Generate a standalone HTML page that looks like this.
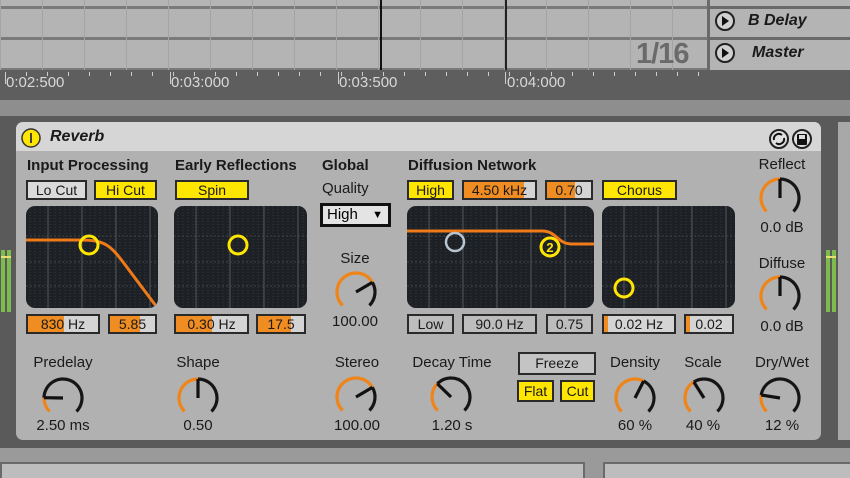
<!DOCTYPE html>
<html><head><meta charset="utf-8">
<style>
*{margin:0;padding:0;box-sizing:border-box}
body{width:850px;height:478px;overflow:hidden;background:#5c5c5c;font-family:"Liberation Sans",sans-serif;position:relative}
.a{position:absolute}
.t{position:absolute;font-size:14px;color:#1a1a1a;white-space:nowrap}
.b{font-weight:bold}
.box{position:absolute;height:20px;border:2px solid #2a2a2a;font-size:14px;text-align:center;line-height:16px;color:#1a1a1a;background:#d4d4d4;overflow:hidden}
.y{background:#ffe600}
.g{background:#bdbdbd}
.fill{position:absolute;left:0;top:0;bottom:0;background:#ef8c22}
.box span{position:relative}
.disp{position:absolute;background:#1d2024;border-radius:9px;overflow:hidden}
.lbl{position:absolute;font-size:15px;color:#1a1a1a;text-align:center;width:90px}
</style></head><body>
<div class="a" style="left:0;top:0;width:850px;height:70px;background:#b4b4b4"></div>
<div class="a" style="left:0;top:6px;width:708px;height:3px;background:#7a7a7a"></div>
<div class="a" style="left:0;top:37px;width:708px;height:3px;background:#7a7a7a"></div>
<div class="a" style="left:0;top:68px;width:708px;height:2px;background:#7a7a7a"></div>
<div id="grid"></div>
<div class="a" style="left:380px;top:0;width:2px;height:70px;background:#111"></div>
<div class="a" style="left:505px;top:0;width:2px;height:100px;background:#222"></div>
<div class="a" style="left:707px;top:0;width:3px;height:70px;background:#6a6a6a"></div>
<div class="a" style="left:710px;top:6px;width:140px;height:3px;background:#6a6a6a"></div>
<div class="a" style="left:710px;top:37px;width:140px;height:3px;background:#6a6a6a"></div>
<div class="t" style="left:636px;top:38px;font-size:29px;color:#6a6a6a;font-weight:bold;letter-spacing:-1px">1/16</div>
<svg class="a" style="left:714px;top:10px" width="22" height="22"><circle cx="11" cy="11" r="9" fill="#d0d0d0" stroke="#222" stroke-width="2"/><path d="M8 6 L15 11 L8 16Z" fill="#111"/></svg>
<svg class="a" style="left:714px;top:42px" width="22" height="22"><circle cx="11" cy="11" r="9" fill="#d0d0d0" stroke="#222" stroke-width="2"/><path d="M8 6 L15 11 L8 16Z" fill="#111"/></svg>
<div class="t b" style="left:748px;top:12px;font-size:16px;font-style:italic">B Delay</div>
<div class="t b" style="left:752px;top:44px;font-size:16px;font-style:italic">Master</div>
<div class="a" style="left:0;top:70px;width:850px;height:30px;background:#5e5e5e"></div>
<div id="ticks"></div>
<div class="t" style="left:6px;top:74px;color:#d8d8d8;font-size:15px">0:02:500</div>
<div class="t" style="left:171px;top:74px;color:#d8d8d8;font-size:15px">0:03:000</div>
<div class="t" style="left:339px;top:74px;color:#d8d8d8;font-size:15px">0:03:500</div>
<div class="t" style="left:507px;top:74px;color:#d8d8d8;font-size:15px">0:04:000</div>
<div class="a" style="left:0;top:100px;width:850px;height:16px;background:#8e8e8e"></div>
<div class="a" style="left:0;top:116px;width:850px;height:332px;background:#5a5a5a"></div>
<div class="a" style="left:838px;top:122px;width:12px;height:318px;background:#a8a8a8"></div>
<div class="a" style="left:1px;top:250px;width:4px;height:62px;background:#7dbb4e"></div>
<div class="a" style="left:7px;top:250px;width:4px;height:62px;background:#7dbb4e"></div>
<div class="a" style="left:1px;top:256px;width:10px;height:2px;background:#e8e070"></div>
<div class="a" style="left:826px;top:250px;width:4px;height:62px;background:#7dbb4e"></div>
<div class="a" style="left:832px;top:250px;width:4px;height:62px;background:#7dbb4e"></div>
<div class="a" style="left:826px;top:256px;width:10px;height:2px;background:#e8e070"></div>
<div class="a" style="left:16px;top:122px;width:805px;height:318px;background:#b1b1b1;border-radius:7px;overflow:hidden">
 <div class="a" style="left:0;top:0;width:805px;height:29px;background:#d6d6d6"></div>
</div>
<svg class="a" style="left:20px;top:127px" width="22" height="22"><circle cx="11" cy="11" r="9" fill="#ffe600" stroke="#333" stroke-width="1.5"/><rect x="10" y="6" width="2" height="10" fill="#444"/></svg>
<div class="t b" style="left:50px;top:128px;font-size:16px;font-style:italic">Reverb</div>
<svg class="a" style="left:768px;top:128px" width="44" height="22"><circle cx="11" cy="11" r="9" fill="#e0e0e0" stroke="#222" stroke-width="2"/><path d="M6 12 A5 5 0 0 1 14 7 M16 10 A5 5 0 0 1 8 15" stroke="#111" stroke-width="2" fill="none"/><circle cx="34" cy="11" r="9" fill="#e0e0e0" stroke="#222" stroke-width="2"/><rect x="29" y="6" width="10" height="11" rx="1" fill="#111"/><rect x="31" y="7" width="6" height="4" fill="#ddd"/></svg>

<div class="t b" style="left:27px;top:157px;font-size:15px">Input Processing</div>
<div class="t b" style="left:175px;top:157px;font-size:15px">Early Reflections</div>
<div class="t b" style="left:322px;top:157px;font-size:15px">Global</div>
<div class="t" style="left:322px;top:180px;font-size:15px">Quality</div>
<div class="t b" style="left:408px;top:157px;font-size:15px">Diffusion Network</div>
<div class="lbl" style="left:737px;top:156px">Reflect</div>
<div class="lbl" style="left:737px;top:255px">Diffuse</div>
<div class="lbl" style="left:310px;top:250px">Size</div>
<div class="lbl" style="left:310px;top:313px">100.00</div>
<div class="lbl" style="left:737px;top:219px">0.0 dB</div>
<div class="lbl" style="left:737px;top:318px">0.0 dB</div>

<div class="box" style="left:26px;top:180px;width:61px;background:#dadada"><span>Lo Cut</span></div>
<div class="box y" style="left:94px;top:180px;width:63px"><span>Hi Cut</span></div>
<div class="box y" style="left:175px;top:180px;width:74px"><span>Spin</span></div>
<div class="box y" style="left:407px;top:180px;width:47px"><span>High</span></div>
<div class="box" style="left:462px;top:180px;width:75px"><div class="fill" style="width:60px"></div><span>4.50 kHz</span></div>
<div class="box" style="left:545px;top:180px;width:48px"><div class="fill" style="width:28px"></div><span>0.70</span></div>
<div class="box y" style="left:602px;top:180px;width:75px"><span>Chorus</span></div>
<div class="a" style="left:320px;top:203px;width:71px;height:24px;border:3px solid #111;background:#e4e4e4;font-size:15px;line-height:18px;padding-left:4px">High<span style="position:absolute;right:5px;top:0;font-size:11px">▼</span></div>

<div class="box" style="left:26px;top:314px;width:74px"><div class="fill" style="width:36px"></div><span>830 Hz</span></div>
<div class="box" style="left:108px;top:314px;width:49px"><div class="fill" style="width:30px"></div><span>5.85</span></div>
<div class="box" style="left:174px;top:314px;width:75px"><div class="fill" style="width:36px"></div><span>0.30 Hz</span></div>
<div class="box" style="left:256px;top:314px;width:50px"><div class="fill" style="width:33px"></div><span>17.5</span></div>
<div class="box g" style="left:407px;top:314px;width:47px"><span>Low</span></div>
<div class="box g" style="left:462px;top:314px;width:75px"><span>90.0 Hz</span></div>
<div class="box g" style="left:546px;top:314px;width:47px"><span>0.75</span></div>
<div class="box" style="left:602px;top:314px;width:74px"><div class="fill" style="width:4px"></div><span>0.02 Hz</span></div>
<div class="box" style="left:684px;top:314px;width:50px"><div class="fill" style="width:4px"></div><span>0.02</span></div>

<div class="disp" style="left:26px;top:206px;width:132px;height:102px"><svg id="d1" width="132" height="102"></svg></div>
<div class="disp" style="left:174px;top:206px;width:133px;height:102px"><svg id="d2" width="133" height="102"></svg></div>
<div class="disp" style="left:407px;top:206px;width:187px;height:102px"><svg id="d3" width="187" height="102"></svg></div>
<div class="disp" style="left:602px;top:206px;width:133px;height:102px"><svg id="d4" width="133" height="102"></svg></div>

<div class="box" style="left:518px;top:352px;width:78px;height:23px;background:#c4c4c4;line-height:19px"><span>Freeze</span></div>
<div class="box y" style="left:517px;top:380px;width:37px;height:22px;line-height:18px"><span>Flat</span></div>
<div class="box y" style="left:560px;top:380px;width:35px;height:22px;line-height:18px"><span>Cut</span></div>

<div class="lbl" style="left:18px;top:354px">Predelay</div>
<div class="lbl" style="left:18px;top:417px">2.50 ms</div>
<div class="lbl" style="left:153px;top:354px">Shape</div>
<div class="lbl" style="left:153px;top:417px">0.50</div>
<div class="lbl" style="left:312px;top:354px">Stereo</div>
<div class="lbl" style="left:312px;top:417px">100.00</div>
<div class="lbl" style="left:407px;top:354px">Decay Time</div>
<div class="lbl" style="left:407px;top:417px">1.20 s</div>
<div class="lbl" style="left:590px;top:354px">Density</div>
<div class="lbl" style="left:590px;top:417px">60 %</div>
<div class="lbl" style="left:658px;top:354px">Scale</div>
<div class="lbl" style="left:658px;top:417px">40 %</div>
<div class="lbl" style="left:737px;top:354px">Dry/Wet</div>
<div class="lbl" style="left:737px;top:417px">12 %</div>

<svg id="knobs" class="a" style="left:0;top:0" width="850" height="478"></svg>
<div class="a" style="left:0;top:448px;width:850px;height:30px;background:#9a9a9a"></div>
<div class="a" style="left:0;top:462px;width:585px;height:16px;background:#bdbdbd;border:2px solid #6a6a6a;border-bottom:none"></div>
<div class="a" style="left:603px;top:462px;width:247px;height:16px;background:#bdbdbd;border:2px solid #6a6a6a;border-bottom:none;border-right:none"></div>
<script>
var g='';
for(var x=0;x<708;x+=42){g+='<div class="a" style="left:'+x+'px;top:0;width:1px;height:70px;background:#a4a4a4"></div>';}
document.getElementById('grid').innerHTML=g;
var t='';
[5,170,338,505].forEach(function(x){t+='<div class="a" style="left:'+x+'px;top:72px;width:1px;height:12px;background:#ccc"></div>';});
for(var x=5;x<710;x+=21){t+='<div class="a" style="left:'+x+'px;top:72px;width:1px;height:4px;background:#ccc"></div>';}
document.getElementById('ticks').innerHTML=t;
function grid(id,w,h){var s='';for(var x=4;x<w;x+=5){s+='<line x1="'+x+'" y1="0" x2="'+x+'" y2="'+h+'" stroke="#4a4d52" stroke-width="0.6" stroke-dasharray="1 2"/>';}
for(var x=22;x<w;x+=34){s+='<line x1="'+x+'" y1="0" x2="'+x+'" y2="'+h+'" stroke="#55585c" stroke-width="1"/>';}
[30,56,80].forEach(function(y){s+='<line x1="0" y1="'+y+'" x2="'+w+'" y2="'+y+'" stroke="#4a4d52" stroke-width="0.8" stroke-dasharray="2 2"/>';});
return s;}
var d=document;
d.getElementById('d1').innerHTML=grid(0,132,102)+'<path d="M0 34 L55 34 C80 34 85 40 100 60 L130 100" stroke="#ef7a1a" stroke-width="3" fill="none"/><circle cx="63" cy="39" r="9" stroke="#ffe600" stroke-width="3" fill="none"/>';
d.getElementById('d2').innerHTML=grid(0,133,102)+'<circle cx="64" cy="39" r="9" stroke="#ffe600" stroke-width="3" fill="none"/>';
d.getElementById('d3').innerHTML=grid(0,187,102)+'<path d="M0 25 L135 25 C150 25 150 38 165 38 L187 38" stroke="#ef7a1a" stroke-width="3" fill="none"/><circle cx="48" cy="36" r="9" stroke="#b8c4d0" stroke-width="2.5" fill="none"/><circle cx="143" cy="41" r="9" stroke="#ffe600" stroke-width="3" fill="none"/><text x="143" y="46" font-size="13" fill="#ffe600" text-anchor="middle" font-family="Liberation Sans" font-weight="bold">2</text>';
d.getElementById('d4').innerHTML=grid(0,133,102)+'<circle cx="22" cy="82" r="9" stroke="#ffe600" stroke-width="3" fill="none"/>';
function pt(cx,cy,r,a){var rad=a*Math.PI/180;return [cx+r*Math.cos(rad),cy-r*Math.sin(rad)];}
function arc(cx,cy,r,a1,a2,col){var p1=pt(cx,cy,r,a1),p2=pt(cx,cy,r,a2);var large=(a1-a2)>180?1:0;return '<path d="M'+p1[0]+' '+p1[1]+' A'+r+' '+r+' 0 '+large+' 1 '+p2[0]+' '+p2[1]+'" stroke="'+col+'" stroke-width="3.2" fill="none"/>';}
function knob(cx,cy,v){var r=19,a0=225,am=a0-270*v;var s='';
if(v>0.001)s+=arc(cx,cy,r,a0,am,'#ef8418');
if(v<0.999)s+=arc(cx,cy,r,am,-45,'#151515');
var p=pt(cx,cy,r,am);s+='<line x1="'+cx+'" y1="'+cy+'" x2="'+p[0]+'" y2="'+p[1]+'" stroke="#111" stroke-width="3.2"/>';return s;}
var k='';
[[356,292,0.72],[780,198,0.5],[780,296,0.5],[63,398,0.17],[198,398,0.5],[356,397,0.72],[451,397,0.33],[635,398,0.6],[704,398,0.38],[780,398,0.2]].forEach(function(a){k+=knob(a[0],a[1],a[2]);});
d.getElementById('knobs').innerHTML=k;
</script>
</body></html>
